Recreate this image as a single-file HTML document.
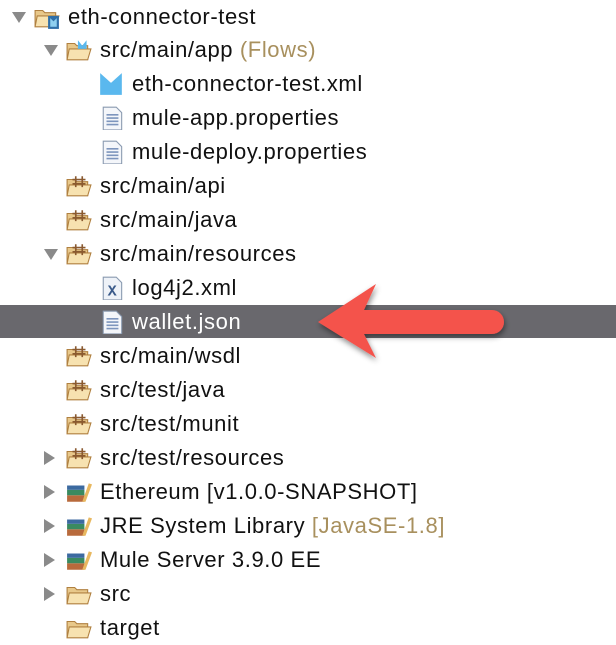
<!DOCTYPE html>
<html><head><style>
body{margin:0;width:616px;height:630px;background:#fff;overflow:hidden;position:relative;font-family:"Liberation Sans",sans-serif;font-size:22px;letter-spacing:0.6px;color:#111}
.r{position:absolute;left:0;width:616px;height:34px;line-height:34px;white-space:nowrap}
.sel{background:#69686d;color:#fff}
.t{position:absolute;top:0}
.tw{position:absolute;top:12px;width:0;height:0}
.down{border-left:7px solid transparent;border-right:7px solid transparent;border-top:11px solid #8a8a8a;top:12px}
.right{border-top:7px solid transparent;border-bottom:7px solid transparent;border-left:11px solid #8a8a8a;top:10px}
.ic{position:absolute;top:5px;width:26px;height:24px}
.g{color:#a8905e}
</style></head><body>
<svg width="0" height="0" style="position:absolute">
<defs>
<g id="fold"><path d="M1 5h7l2 2h10v13H1z" fill="#e8c88a" stroke="#b08040"/><path d="M3 10h20l-3 10H1z" fill="#f7e2b0" stroke="#b08040"/></g>
<g id="pkg"><path d="M1 5h7l2 2h10v13H1z" fill="#e8c88a" stroke="#b08040"/><path d="M3 10h20l-3 10H1z" fill="#f7e2b0" stroke="#b08040"/><path d="M9 2v10M15 2v10M6 5h12M6 9h12" stroke="#8a5a30" stroke-width="1.5"/></g>
<g id="doc"><path d="M3 1h12l5 5v16H3z" fill="#f4f6fa" stroke="#8a9ab0"/><path d="M6 8h11M6 11h11M6 14h11M6 17h11" stroke="#7d95bd" stroke-width="1.5"/></g>
<g id="lib"><rect x="1" y="14" width="16" height="6" fill="#b86a3c"/><rect x="1" y="9" width="16" height="5" fill="#3a8a60"/><rect x="1" y="5" width="16" height="4" fill="#3c6aa0"/><path d="M15 20L21 3l3 1-6 16z" fill="#e8b860"/></g>
</defs></svg>

<div class="r" style="top:0"><div class="tw down" style="left:12px"></div><svg class="ic" style="left:34px" viewBox="0 0 24 22"><use href="#fold"/><rect x="13" y="10" width="10" height="12" fill="#2f6fa8"/><path d="M15 12l3 3 3-3v8h-6z" fill="#8fd0f0"/></svg><span class="t" style="left:68px">eth-connector-test</span></div>
<div class="r" style="top:33px"><div class="tw down" style="left:44px"></div><svg class="ic" style="left:66px" viewBox="0 0 24 22"><use href="#fold"/><path d="M11 2l4 5 4-5v8h-8z" fill="#5ab8ee"/></svg><span class="t" style="left:100px">src/main/app <span class="g">(Flows)</span></span></div>
<div class="r" style="top:67px"><svg class="ic" style="left:98px" viewBox="0 0 24 22"><path d="M2 1l10 9 10-9v20H2z" fill="#5ab8ee"/></svg><span class="t" style="left:132px">eth-connector-test.xml</span></div>
<div class="r" style="top:101px"><svg class="ic" style="left:100px" viewBox="0 0 24 22"><use href="#doc"/></svg><span class="t" style="left:132px">mule-app.properties</span></div>
<div class="r" style="top:135px"><svg class="ic" style="left:100px" viewBox="0 0 24 22"><use href="#doc"/></svg><span class="t" style="left:132px">mule-deploy.properties</span></div>
<div class="r" style="top:169px"><svg class="ic" style="left:66px" viewBox="0 0 24 22"><use href="#pkg"/></svg><span class="t" style="left:100px">src/main/api</span></div>
<div class="r" style="top:203px"><svg class="ic" style="left:66px" viewBox="0 0 24 22"><use href="#pkg"/></svg><span class="t" style="left:100px">src/main/java</span></div>
<div class="r" style="top:237px"><div class="tw down" style="left:44px"></div><svg class="ic" style="left:66px" viewBox="0 0 24 22"><use href="#pkg"/></svg><span class="t" style="left:100px">src/main/resources</span></div>
<div class="r" style="top:271px"><svg class="ic" style="left:100px" viewBox="0 0 24 22"><path d="M3 1h12l5 5v16H3z" fill="#eef2f8" stroke="#8a9ab0"/><text x="7" y="18" font-size="14" font-family="Liberation Mono" fill="#3a5a8a" font-weight="bold">X</text></svg><span class="t" style="left:132px">log4j2.xml</span></div>
<div class="r sel" style="top:305px;height:33px"><svg class="ic" style="left:100px" viewBox="0 0 24 22"><use href="#doc"/></svg><span class="t" style="left:132px">wallet.json</span></div>
<div class="r" style="top:339px"><svg class="ic" style="left:66px" viewBox="0 0 24 22"><use href="#pkg"/></svg><span class="t" style="left:100px">src/main/wsdl</span></div>
<div class="r" style="top:373px"><svg class="ic" style="left:66px" viewBox="0 0 24 22"><use href="#pkg"/></svg><span class="t" style="left:100px">src/test/java</span></div>
<div class="r" style="top:407px"><svg class="ic" style="left:66px" viewBox="0 0 24 22"><use href="#pkg"/></svg><span class="t" style="left:100px">src/test/munit</span></div>
<div class="r" style="top:441px"><div class="tw right" style="left:44px"></div><svg class="ic" style="left:66px" viewBox="0 0 24 22"><use href="#pkg"/></svg><span class="t" style="left:100px">src/test/resources</span></div>
<div class="r" style="top:475px"><div class="tw right" style="left:44px"></div><svg class="ic" style="left:66px" viewBox="0 0 24 22"><use href="#lib"/></svg><span class="t" style="left:100px">Ethereum [v1.0.0-SNAPSHOT]</span></div>
<div class="r" style="top:509px"><div class="tw right" style="left:44px"></div><svg class="ic" style="left:66px" viewBox="0 0 24 22"><use href="#lib"/></svg><span class="t" style="left:100px">JRE System Library <span class="g">[JavaSE-1.8]</span></span></div>
<div class="r" style="top:543px"><div class="tw right" style="left:44px"></div><svg class="ic" style="left:66px" viewBox="0 0 24 22"><use href="#lib"/></svg><span class="t" style="left:100px">Mule Server 3.9.0 EE</span></div>
<div class="r" style="top:577px"><div class="tw right" style="left:44px"></div><svg class="ic" style="left:66px" viewBox="0 0 24 22"><use href="#fold"/></svg><span class="t" style="left:100px">src</span></div>
<div class="r" style="top:611px"><svg class="ic" style="left:66px" viewBox="0 0 24 22"><use href="#fold"/></svg><span class="t" style="left:100px">target</span></div>

<svg style="position:absolute;left:0;top:0" width="616" height="630">
<defs><filter id="sh" x="-20%" y="-20%" width="140%" height="140%"><feDropShadow dx="1" dy="3" stdDeviation="3" flood-opacity="0.45"/></filter></defs>
<g filter="url(#sh)" fill="#f4524c">
<path d="M318 322L376 284L364 310H492a12 12 0 0 1 0 24H364L376 358z"/>
</g>
</svg>
</body></html>
